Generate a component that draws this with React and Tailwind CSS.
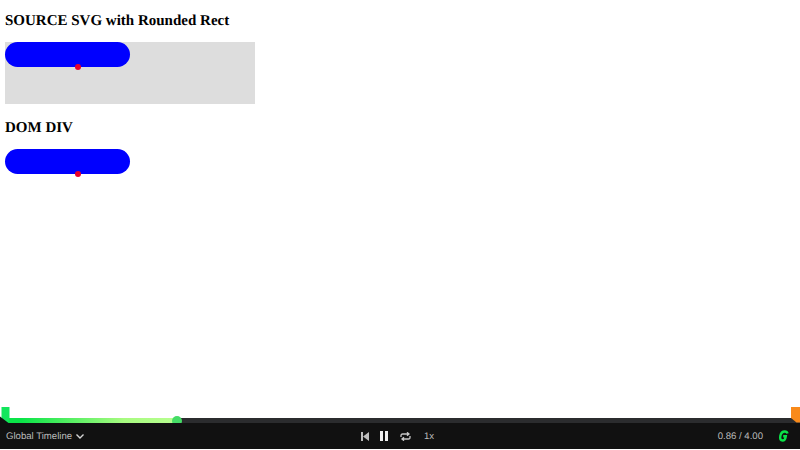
function Pill() {
    return (
        <div className="relative h-[25px] w-[125px] rounded-[12.5px] bg-[#0000ff]">
            <div className="absolute left-[69.5px] top-[21.5px] h-[6px] w-[6px] rounded-full bg-[#e8002a]"></div>
        </div>
    );
}

export default function App() {
    return (
        <div className="flex h-[450px] w-[800px] flex-col bg-white font-['Liberation_Serif',serif] text-black [text-rendering:geometricPrecision]">
            <div className="flex-1 pl-[5px] pt-[11px]">
                <h3 className="text-[15px] leading-[21px] font-bold">SOURCE SVG with Rounded Rect</h3>
                <div className="mt-[10px] h-[62px] w-[250px] bg-[#dddddd]">
                    <Pill />
                </div>
                <h3 className="mt-[14px] text-[15px] leading-[21px] font-bold">DOM DIV</h3>
                <div className="mt-[10px]">
                    <Pill />
                </div>
            </div>

            <div className="relative font-['Liberation_Sans',sans-serif]">
                <div className="relative h-[5px] bg-[#2b2c2e]">
                    <div className="h-full w-[177px] bg-[linear-gradient(to_right,#0ae448_12%,#a8fb80_70%,#b8ff90)]"></div>
                    <div className="absolute left-[172px] top-[-2.5px] h-[10px] w-[10px] rounded-full bg-[#45dc66]"></div>
                </div>

                {/* in / out handles */}
                <svg className="absolute left-0 top-[-11px]" width="10" height="16" viewBox="0 0 10 16">
                    <path d="M1.5 0H9.5V11L8 16L1.5 11Z" fill="#12e65c" />
                    <path d="M0 9.5L8.5 16H0Z" fill="#111111" />
                </svg>
                <svg className="absolute right-0 top-[-11px]" width="9" height="16" viewBox="0 0 9 16">
                    <path d="M0 0H9V15.5H5.5L0 11Z" fill="#f98a1a" />
                </svg>

                <div className="relative flex h-[26px] items-center justify-between bg-[#111111] pl-[6px] pr-[11px] pt-[1px] text-[9.6px] text-[#bbbbbb]">
                    <div className="flex items-center gap-[4px]">
                        <span className="pt-[2px]">Global Timeline</span>
                        <svg width="8" height="5" viewBox="0 0 8 5" fill="none" stroke="#d5d5d5" strokeWidth="1.4">
                            <path d="M0.5 0.5L4 4L7.5 0.5" />
                        </svg>
                    </div>
                    <div className="absolute left-[361px] flex items-center">
                        <svg width="8" height="9" viewBox="0 0 8 9" fill="#bdbdbd">
                            <path d="M0 0H2V9H0ZM8 0V9L2 4.5Z" />
                        </svg>
                        <div className="ml-[11px] flex h-[10px] gap-[2px]">
                            <div className="w-[3px] bg-[#f0f0f0]"></div>
                            <div className="w-[3px] bg-[#f0f0f0]"></div>
                        </div>
                        <svg className="ml-[12px]" width="11" height="9" viewBox="0 0 11 9" fill="none" stroke="#c8c8c8" strokeWidth="1.3">
                            <path d="M1 5V3.5Q1 2 2.5 2H8.5M7 0.3L9 2L7 3.7" />
                            <path d="M10 4V5.5Q10 7 8.5 7H2.5M4 5.3L2 7L4 8.7" />
                        </svg>
                        <span className="ml-[13px] pt-[2px]">1x</span>
                    </div>
                    <div className="flex items-center gap-[15px]">
                        <span className="pt-[2px]">0.86 / 4.00</span>
                        {/* logo */}
                        <svg width="11" height="12" viewBox="0 0 11 12" fill="none" stroke="#0ae448" strokeWidth="2.4">
                            <path d="M9.5 3.5Q9 1.5 6.8 1.5Q3.2 1.5 2.3 6Q1.5 10.5 4.6 10.5Q7.2 10.5 7.8 6.3H5.2" />
                        </svg>
                    </div>
                </div>
                <div className="h-px bg-white"></div>
            </div>
        </div>
    );
}
